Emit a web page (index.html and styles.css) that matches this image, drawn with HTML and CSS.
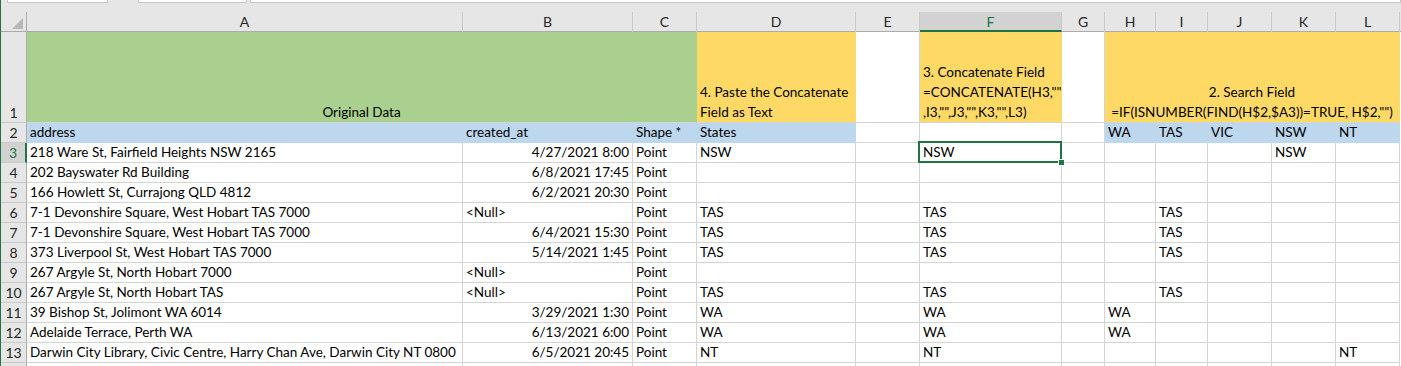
FILE: index.html
```html
<!DOCTYPE html>
<html lang="en">
  <head>
    <meta charset="UTF-8" />
    <meta name="viewport" content="width=device-width, initial-scale=1.0" />
    <title>States - Excel</title>
    <link rel="stylesheet" href="styles.css">
  </head>
  <body>
    <div class="sheet">
      <div class="bar">
        <div class="box box1"></div>
        <div class="box box2"></div>
        <div class="box box3"></div>
      </div>

      <div class="row heads">
        <div class="corner"></div>
        <div class="h">A</div><div class="h">B</div><div class="h">C</div>
        <div class="h">D</div><div class="h">E</div><div class="h on">F</div>
        <div class="h">G</div><div class="h">H</div><div class="h">I</div>
        <div class="h">J</div><div class="h">K</div><div class="h">L</div>
      </div>

      <div class="row tall">
        <div class="rh">1</div>
        <div class="c green span3 mid">Original Data</div>
        <div class="c yellow">4. Paste the Concatenate<br>Field as Text</div>
        <div class="c"></div>
        <div class="c yellow">3. Concatenate Field<br>=CONCATENATE(H3,""<br>,I3,"",J3,"",K3,"",L3)</div>
        <div class="c"></div>
        <div class="c yellow span5 mid">2. Search Field<br>=IF(ISNUMBER(FIND(H$2,$A3))=TRUE, H$2,"")</div>
      </div>

      <div class="row">
        <div class="rh">2</div>
        <div class="c blue">address</div><div class="c blue">created_at</div><div class="c blue">Shape *</div><div class="c blue">States</div>
        <div class="c"></div><div class="c"></div><div class="c"></div>
        <div class="c blue">WA</div><div class="c blue">TAS</div><div class="c blue">VIC</div><div class="c blue">NSW</div><div class="c blue">NT</div>
      </div>

      <div class="row">
        <div class="rh on">3</div>
        <div class="c">218 Ware St, Fairfield Heights NSW 2165</div><div class="c r">4/27/2021 8:00</div><div class="c">Point</div><div class="c">NSW</div>
        <div class="c"></div><div class="c sel">NSW</div><div class="c"></div>
        <div class="c"></div><div class="c"></div><div class="c"></div><div class="c">NSW</div><div class="c"></div>
      </div>

      <div class="row">
        <div class="rh">4</div>
        <div class="c">202 Bayswater Rd Building</div><div class="c r">6/8/2021 17:45</div><div class="c">Point</div><div class="c"></div>
        <div class="c"></div><div class="c"></div><div class="c"></div>
        <div class="c"></div><div class="c"></div><div class="c"></div><div class="c"></div><div class="c"></div>
      </div>

      <div class="row">
        <div class="rh">5</div>
        <div class="c">166 Howlett St, Currajong QLD 4812</div><div class="c r">6/2/2021 20:30</div><div class="c">Point</div><div class="c"></div>
        <div class="c"></div><div class="c"></div><div class="c"></div>
        <div class="c"></div><div class="c"></div><div class="c"></div><div class="c"></div><div class="c"></div>
      </div>

      <div class="row">
        <div class="rh">6</div>
        <div class="c">7-1 Devonshire Square, West Hobart TAS 7000</div><div class="c">&lt;Null&gt;</div><div class="c">Point</div><div class="c">TAS</div>
        <div class="c"></div><div class="c">TAS</div><div class="c"></div>
        <div class="c"></div><div class="c">TAS</div><div class="c"></div><div class="c"></div><div class="c"></div>
      </div>

      <div class="row">
        <div class="rh">7</div>
        <div class="c">7-1 Devonshire Square, West Hobart TAS 7000</div><div class="c r">6/4/2021 15:30</div><div class="c">Point</div><div class="c">TAS</div>
        <div class="c"></div><div class="c">TAS</div><div class="c"></div>
        <div class="c"></div><div class="c">TAS</div><div class="c"></div><div class="c"></div><div class="c"></div>
      </div>

      <div class="row">
        <div class="rh">8</div>
        <div class="c">373 Liverpool St, West Hobart TAS 7000</div><div class="c r">5/14/2021 1:45</div><div class="c">Point</div><div class="c">TAS</div>
        <div class="c"></div><div class="c">TAS</div><div class="c"></div>
        <div class="c"></div><div class="c">TAS</div><div class="c"></div><div class="c"></div><div class="c"></div>
      </div>

      <div class="row">
        <div class="rh">9</div>
        <div class="c">267 Argyle St, North Hobart 7000</div><div class="c">&lt;Null&gt;</div><div class="c">Point</div><div class="c"></div>
        <div class="c"></div><div class="c"></div><div class="c"></div>
        <div class="c"></div><div class="c"></div><div class="c"></div><div class="c"></div><div class="c"></div>
      </div>

      <div class="row">
        <div class="rh">10</div>
        <div class="c">267 Argyle St, North Hobart TAS</div><div class="c">&lt;Null&gt;</div><div class="c">Point</div><div class="c">TAS</div>
        <div class="c"></div><div class="c">TAS</div><div class="c"></div>
        <div class="c"></div><div class="c">TAS</div><div class="c"></div><div class="c"></div><div class="c"></div>
      </div>

      <div class="row">
        <div class="rh">11</div>
        <div class="c">39 Bishop St, Jolimont WA 6014</div><div class="c r">3/29/2021 1:30</div><div class="c">Point</div><div class="c">WA</div>
        <div class="c"></div><div class="c">WA</div><div class="c"></div>
        <div class="c">WA</div><div class="c"></div><div class="c"></div><div class="c"></div><div class="c"></div>
      </div>

      <div class="row">
        <div class="rh">12</div>
        <div class="c">Adelaide Terrace, Perth WA</div><div class="c r">6/13/2021 6:00</div><div class="c">Point</div><div class="c">WA</div>
        <div class="c"></div><div class="c">WA</div><div class="c"></div>
        <div class="c">WA</div><div class="c"></div><div class="c"></div><div class="c"></div><div class="c"></div>
      </div>

      <div class="row">
        <div class="rh">13</div>
        <div class="c">Darwin City Library, Civic Centre, Harry Chan Ave, Darwin City NT 0800</div><div class="c r">6/5/2021 20:45</div><div class="c">Point</div><div class="c">NT</div>
        <div class="c"></div><div class="c">NT</div><div class="c"></div>
        <div class="c"></div><div class="c"></div><div class="c"></div><div class="c"></div><div class="c">NT</div>
      </div>

      <div class="row">
        <div class="rh"></div>
        <div class="c"></div><div class="c"></div><div class="c"></div><div class="c"></div>
        <div class="c"></div><div class="c"></div><div class="c"></div>
        <div class="c"></div><div class="c"></div><div class="c"></div><div class="c"></div><div class="c"></div>
      </div>
    </div>
  </body>
</html>
```

FILE: styles.css
```css
body {
  margin: 0;
  height: 366px;
  overflow: hidden;
  background-color: white;
  font-family: Lato, "Liberation Sans", sans-serif;
  font-size: 13.5px;
  color: #000;
}
.sheet {
  border-left: 1px solid #217346;
  height: 366px;
}
.bar {
  height: 12px;
  background-color: #e6e6e6;
  display: flex;
  align-items: flex-start;
}
.box {
  height: 2px;
  background-color: white;
  border: 1px solid #c6c6c6;
  border-top: none;
}
.box1 {
  margin-left: 6px;
  width: 99px;
}
.box2 {
  margin-left: 30px;
  width: 107px;
}
.box3 {
  margin-left: 3px;
  flex: 1;
}
.row {
  display: grid;
  grid-template-columns: 26px 436px 170px 64px 159px 64px 142px 43px 51px 52px 64px 64px 64px;
  height: 20px;
}
.tall {
  height: 91px;
}
.heads {
  background-color: #e6e6e6;
  border-bottom: 1px solid #ababab;
  height: 19px;
  color: #262626;
  font-size: 14px;
}
.corner {
  border-right: 1px solid #ababab;
  display: flex;
  justify-content: flex-end;
  align-items: flex-end;
  padding: 0 3px 3px 0;
}
.corner::after {
  content: "";
  width: 0;
  height: 0;
  border-left: 11px solid transparent;
  border-bottom: 11px solid #b8b8b8;
}
.h {
  border-right: 1px solid #c9c9c9;
  text-align: center;
  line-height: 19px;
}
.h.on {
  background-color: #d2d2d2;
  color: #217346;
  border-bottom: 2px solid #217346;
  height: 18px;
}
.rh {
  background-color: #e6e6e6;
  border-right: 1px solid #ababab;
  border-bottom: 1px solid #c9c9c9;
  color: #262626;
  font-size: 14px;
  display: flex;
  align-items: flex-end;
  justify-content: center;
  line-height: 19px;
}
.rh.on {
  background-color: #d2d2d2;
  color: #217346;
  border-right: 2px solid #217346;
}
.c {
  border-right: 1px solid #d4d4d4;
  border-bottom: 1px solid #d4d4d4;
  padding: 0 3px;
  line-height: 19px;
  white-space: nowrap;
}
.tall .c {
  display: flex;
  align-items: flex-end;
  line-height: 20px;
}
.tall .c.mid {
  justify-content: center;
  text-align: center;
}
.r {
  text-align: right;
}
.span3 {
  grid-column: span 3;
}
.span5 {
  grid-column: span 5;
}
.green {
  background-color: #a9d08e;
  border-right-color: #a9d08e;
}
.yellow {
  background-color: #ffd966;
  border-right-color: #ffd966;
}
.blue {
  background-color: #bdd7ee;
  border-right-color: #bdd7ee;
  border-bottom-color: #bdd7ee;
}
.sel {
  position: relative;
}
.sel::before {
  content: "";
  position: absolute;
  top: -2px;
  left: -2px;
  right: -1px;
  bottom: -1px;
  border: 2px solid #217346;
}
.sel::after {
  content: "";
  position: absolute;
  right: -4px;
  bottom: -4px;
  width: 5px;
  height: 5px;
  background-color: #217346;
  border: 1px solid white;
}
```
